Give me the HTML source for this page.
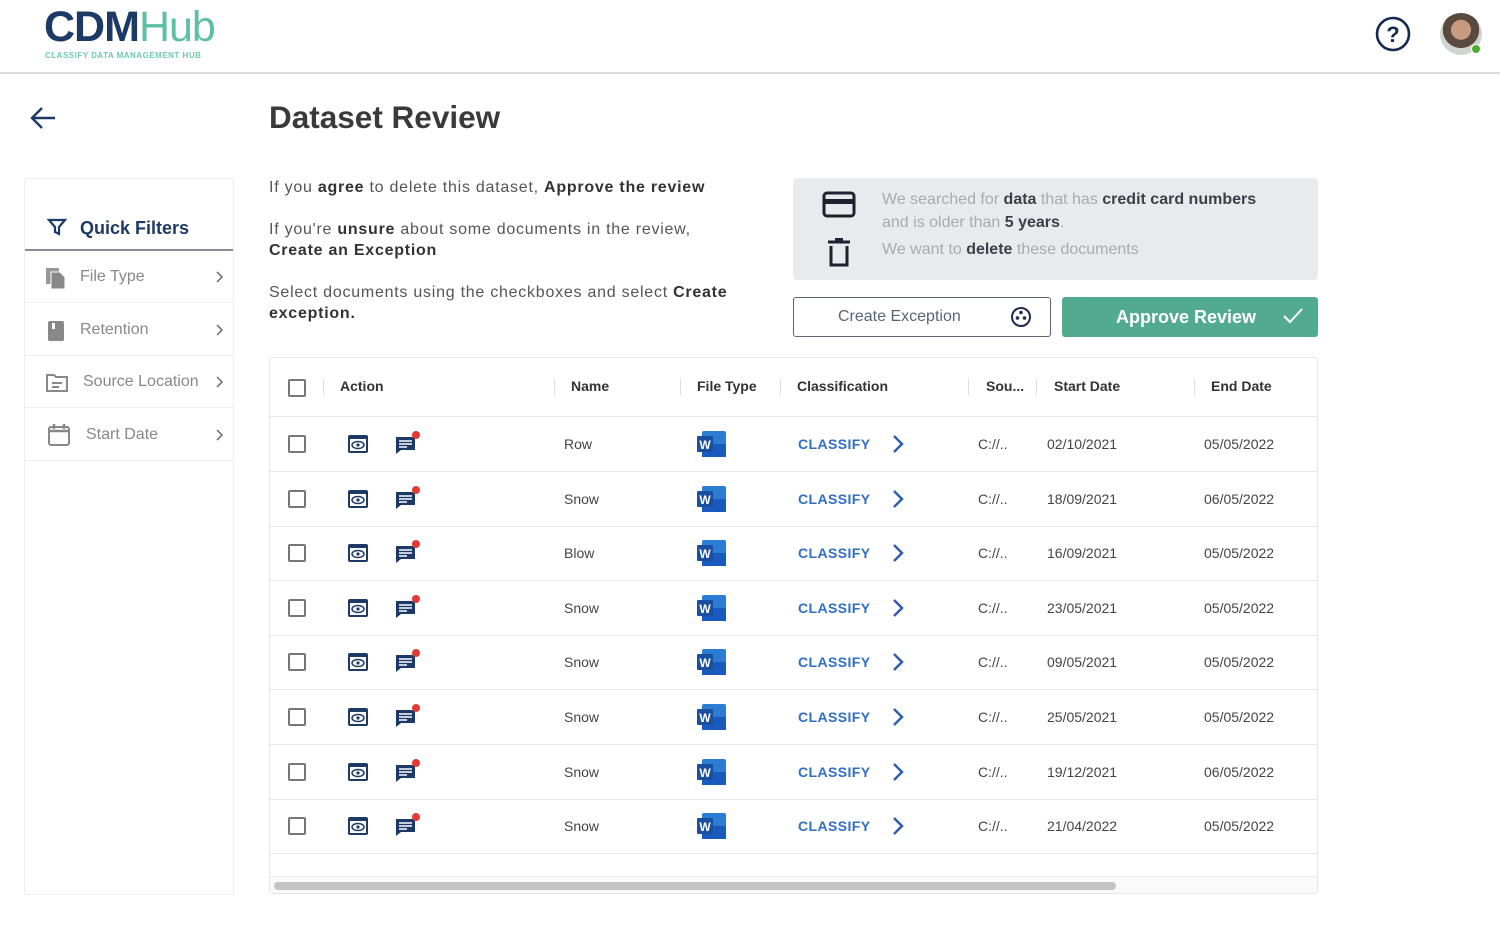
<!DOCTYPE html>
<html><head><meta charset="utf-8"><style>
*{box-sizing:border-box;margin:0;padding:0}
body{width:1500px;height:926px;background:#fff;font-family:"Liberation Sans",sans-serif;position:relative;overflow:hidden;color:#333}
.a{position:absolute}
.hdr{left:0;top:0;width:1500px;height:74px;border-bottom:2px solid #ddd}
.side{left:24px;top:178px;width:210px;height:717px;border:1px solid #eee;border-radius:3px}
.fi{position:absolute;left:0;width:208px;height:52px;border-bottom:1px solid #eee;color:#888;font-size:16px}
.fi span{position:absolute;top:17px}
.fi .ch{position:absolute;left:190px;top:19px}
.txt{font-size:16px;color:#555;letter-spacing:.75px;line-height:21px}
.txt b{color:#333}
.tbl{left:269px;top:357px;width:1049px;height:537px;border:1px solid #e6e6e6;border-radius:3px}
.th{position:absolute;top:20px;font-size:14px;font-weight:bold;color:#333}
.sep{position:absolute;top:21px;width:1px;height:16px;background:#ddd}
.row{position:absolute;left:0;width:1047px;height:55px;border-bottom:1px solid #e6e6e6;font-size:14px;color:#444}
.row > *{position:absolute}
.cb{width:18px;height:18px;border:2px solid #777;border-radius:2px}
.cl{color:#2f6fc4;font-weight:bold;letter-spacing:.4px}
</style></head><body>
<div class="a hdr"></div>
<div class="a" style="left:44px;top:3px;font-size:43px;font-weight:bold;color:#1d3a66;letter-spacing:-1px">CDM<span style="font-weight:normal;color:#5cbfa6">Hub</span></div>
<div class="a" style="left:45px;top:51px;font-size:8px;font-weight:bold;color:#6ccab4;letter-spacing:.5px">CLASSIFY DATA MANAGEMENT HUB</div>
<svg class="a" style="left:1375px;top:16px" width="36" height="36" viewBox="0 0 36 36"><circle cx="18" cy="18" r="16" fill="none" stroke="#142a4e" stroke-width="2.6"/><text x="18" y="26" text-anchor="middle" font-size="22" font-weight="bold" fill="#142a4e" font-family="Liberation Sans">?</text></svg>
<div class="a" style="left:1440px;top:13px;width:42px;height:42px;border-radius:50%;background:radial-gradient(circle at 50% 40%,#c89a80 0 30%,#5a4a3e 31% 55%,#cfd6d2 56%)"></div>
<div class="a" style="left:1471px;top:44px;width:10px;height:10px;border-radius:50%;background:#4caf30;border:1px solid #fff"></div>

<svg class="a" style="left:28px;top:104px" width="30" height="28" viewBox="0 0 30 28"><path d="M27 14H4M14 4L4 14l10 10" fill="none" stroke="#1d3a66" stroke-width="2.4"/></svg>
<div class="a" style="left:269px;top:99px;font-size:31.5px;font-weight:bold;color:#3a3a3a">Dataset Review</div>

<div class="a side">
<svg class="a" style="left:22px;top:38px" width="20" height="20" viewBox="0 0 20 20"><path d="M2 3h16l-6 7v7l-4-2v-5z" fill="none" stroke="#1d3a66" stroke-width="2.2"/></svg>
<div class="a" style="left:55px;top:39px;font-size:18px;font-weight:bold;color:#1d3a66">Quick Filters</div>
<div class="a" style="left:0;top:70px;width:208px;height:2px;background:#888a9a"></div>
<div class="fi" style="top:72px"><svg class="a" style="left:20px;top:16px" width="22" height="22" viewBox="0 0 22 22"><rect x="1" y="1" width="13" height="16" fill="#999"/><path d="M6 5h9l5 5v12H6z" fill="#888" stroke="#fff" stroke-width="1"/></svg><span style="left:55px">File Type</span><svg class="ch" width="10" height="14"><path d="M2 2l5 5-5 5" fill="none" stroke="#777" stroke-width="1.6"/></svg></div>
<div class="fi" style="top:125px"><svg class="a" style="left:22px;top:16px" width="18" height="22"><rect x="1" y="1" width="16" height="20" rx="2" fill="#888"/><rect x="5" y="3" width="3" height="6" fill="#fff"/></svg><span style="left:55px">Retention</span><svg class="ch" width="10" height="14"><path d="M2 2l5 5-5 5" fill="none" stroke="#777" stroke-width="1.6"/></svg></div>
<div class="fi" style="top:177px"><svg class="a" style="left:20px;top:17px" width="24" height="20"><path d="M2 2h7l2 2h11v14H2z" fill="none" stroke="#888" stroke-width="2"/><path d="M7 10h10M7 14h7" stroke="#888" stroke-width="2"/></svg><span style="left:58px">Source Location</span><svg class="ch" width="10" height="14"><path d="M2 2l5 5-5 5" fill="none" stroke="#777" stroke-width="1.6"/></svg></div>
<div class="fi" style="top:230px"><svg class="a" style="left:22px;top:14px" width="24" height="24"><rect x="2" y="4" width="20" height="18" rx="2" fill="none" stroke="#888" stroke-width="2"/><path d="M2 8h20M7 1v5M17 1v5" stroke="#888" stroke-width="2.5"/></svg><span style="left:61px">Start Date</span><svg class="ch" width="10" height="14"><path d="M2 2l5 5-5 5" fill="none" stroke="#777" stroke-width="1.6"/></svg></div>
</div>

<div class="a txt" style="left:269px;top:177px">If you <b>agree</b> to delete this dataset, <b>Approve the review</b></div>
<div class="a txt" style="left:269px;top:219px;width:480px">If you're <b>unsure</b> about some documents in the review,<br><b>Create an Exception</b></div>
<div class="a txt" style="left:269px;top:282px;width:480px">Select documents using the checkboxes and select <b>Create exception.</b></div>

<div class="a" style="left:793px;top:178px;width:525px;height:102px;background:#e8eaee;border-radius:4px"></div>
<svg class="a" style="left:822px;top:191px" width="34" height="28"><rect x="2" y="2" width="30" height="23" rx="3" fill="none" stroke="#1c2230" stroke-width="3"/><rect x="2" y="8" width="30" height="5" fill="#1c2230"/></svg>
<svg class="a" style="left:826px;top:238px" width="26" height="30"><path d="M2 4h22M9 1h8" stroke="#1c2230" stroke-width="3"/><path d="M5 8v19h16V8" fill="none" stroke="#1c2230" stroke-width="3"/></svg>
<div class="a" style="left:882px;top:188px;font-size:16px;color:#aaa;line-height:23px">We searched for <b style="color:#3a3f4a">data</b> that has <b style="color:#3a3f4a">credit card numbers</b><br>and is older than <b style="color:#3a3f4a">5 years</b>.</div>
<div class="a" style="left:882px;top:241px;font-size:16px;color:#aaa">We want to <b style="color:#3a3f4a">delete</b> these documents</div>

<div class="a" style="left:793px;top:297px;width:258px;height:40px;border:1.5px solid #5b6478;border-radius:3px;font-size:16px;color:#5b6478"><span class="a" style="left:44px;top:10px">Create Exception</span>
<svg class="a" style="left:216px;top:8px" width="22" height="22"><circle cx="11" cy="11" r="9" fill="none" stroke="#1d2a4e" stroke-width="2"/><circle cx="7.5" cy="12" r="1.8" fill="#1d2a4e"/><circle cx="14.5" cy="12" r="1.8" fill="#1d2a4e"/><circle cx="11" cy="6.5" r="1.8" fill="#1d2a4e"/></svg></div>
<div class="a" style="left:1062px;top:297px;width:256px;height:40px;background:#52ab8f;border-radius:3px;color:#fff;font-size:18px;font-weight:bold"><span class="a" style="left:54px;top:10px">Approve Review</span>
<svg class="a" style="left:220px;top:10px" width="22" height="18"><path d="M2 9l6 6L20 2" fill="none" stroke="#fff" stroke-width="2"/></svg></div>

<div class="a tbl">
<div class="cb a" style="left:18px;top:21px"></div>
<div class="sep" style="left:53px"></div><div class="th" style="left:70px">Action</div>
<div class="sep" style="left:284px"></div><div class="th" style="left:301px">Name</div>
<div class="sep" style="left:410px"></div><div class="th" style="left:427px">File Type</div>
<div class="sep" style="left:510px"></div><div class="th" style="left:527px">Classification</div>
<div class="sep" style="left:698px"></div><div class="th" style="left:716px">Sou...</div>
<div class="sep" style="left:766px"></div><div class="th" style="left:784px">Start Date</div>
<div class="sep" style="left:924px"></div><div class="th" style="left:941px">End Date</div>
<div class="a" style="left:0;top:58px;width:1047px;height:1px;background:#e6e6e6"></div>
<div id="rows"></div>
<div class="a" style="left:0;top:518px;width:1047px;height:17px;background:#fafafa;border-top:1px solid #eee"></div>
<div class="a" style="left:4px;top:524px;width:842px;height:8px;border-radius:4px;background:#c4c4c4"></div>
</div>
<script>
var d=[["Row","02/10/2021","05/05/2022"],["Snow","18/09/2021","06/05/2022"],["Blow","16/09/2021","05/05/2022"],["Snow","23/05/2021","05/05/2022"],["Snow","09/05/2021","05/05/2022"],["Snow","25/05/2021","05/05/2022"],["Snow","19/12/2021","06/05/2022"],["Snow","21/04/2022","05/05/2022"]];
var h="";d.forEach(function(r,i){var t=59+i*54.6;
h+='<div class="row" style="top:'+t+'px"><div class="cb" style="left:18px;top:18px"></div>'+
'<svg style="left:77px;top:17px" width="22" height="20"><rect x="1" y="1" width="20" height="18" rx="2" fill="#1d3a66"/><rect x="3" y="5" width="16" height="12" fill="#fff"/><ellipse cx="11" cy="11" rx="6" ry="3.5" fill="none" stroke="#1d3a66" stroke-width="1.5"/><circle cx="11" cy="11" r="1.6" fill="#1d3a66"/></svg>'+
'<svg style="left:124px;top:12px" width="26" height="26"><path d="M2 8h19v13H7l-5 4z" fill="#1d3a66"/><path d="M5 12h13M5 15h13M5 18h8" stroke="#fff" stroke-width="1.4"/><circle cx="22" cy="6" r="4" fill="#e53935"/></svg>'+
'<span style="left:294px;top:19px">'+r[0]+'</span>'+
'<svg style="left:426px;top:13px" width="31" height="28"><rect x="6" y="1" width="24" height="26" rx="2" fill="#2b7cd3"/><rect x="6" y="14" width="24" height="13" fill="#185abd"/><rect x="1" y="6" width="16" height="16" rx="1" fill="#1a4fa0"/><text x="9" y="19" text-anchor="middle" font-size="12" font-weight="bold" fill="#fff" font-family="Liberation Sans">W</text></svg>'+
'<span class="cl" style="left:528px;top:19px">CLASSIFY</span>'+
'<svg style="left:621px;top:17px" width="14" height="20"><path d="M3 2l8 8-8 8" fill="none" stroke="#2f5fa8" stroke-width="2.5"/></svg>'+
'<span style="left:708px;top:19px">C://..</span><span style="left:777px;top:19px">'+r[1]+'</span><span style="left:934px;top:19px">'+r[2]+'</span></div>';});
document.getElementById("rows").innerHTML=h;
</script>
</body></html>
